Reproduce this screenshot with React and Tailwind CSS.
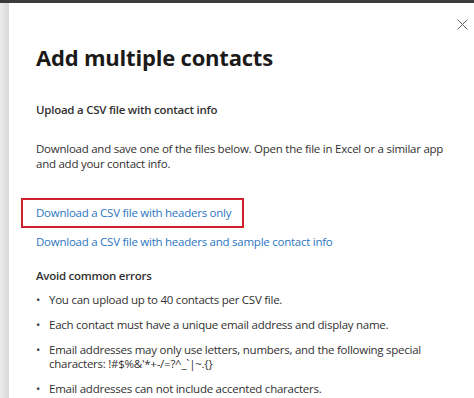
import React from "react";

export default function App() {
  const font = { fontFamily: '"Open Sans", "Noto Sans", sans-serif' };
  return (
    <div className="w-[474px] h-[398px] overflow-hidden bg-white flex flex-col" style={font}>
      <div className="h-[3px] bg-[#3b3b3b] shrink-0" />
      <div className="flex flex-1 min-h-0">
        <div className="w-[9px] shrink-0 bg-gradient-to-r from-[#ececec] to-[#d9d9d9]" />
        <div className="flex-1 relative bg-white text-[#323130]">
          <button className="absolute right-[6px] top-[16px] w-[11px] h-[11px] text-[#605e5c]">
            <svg viewBox="0 0 11 11" className="w-[11px] h-[11px]" fill="none" stroke="currentColor" strokeWidth="1">
              <path d="M0.5 0.5L10.5 10.5M10.5 0.5L0.5 10.5" />
            </svg>
          </button>
          <div className="pl-[27px] pt-[38px] pr-4 text-[11.5px] tracking-[-0.25px]">
            <h1 className="text-[22px] leading-[32px] font-bold text-[#1b1a19] tracking-[-0.2px]">Add multiple contacts</h1>
            <p className="mt-[28px] leading-[18px] font-semibold">Upload a CSV file with contact info</p>
            <p className="mt-[22px] leading-[15px]">
              Download and save one of the files below. Open the file in Excel or a similar app and add your contact info.
            </p>
            <div className="mt-[27px] -ml-[15px] w-[223px] h-[30px] border-2 border-[#d0202e] flex items-center pl-[13px] whitespace-nowrap">
              <a className="text-[#2b76c0]">Download a CSV file with headers only</a>
            </div>
            <a className="block mt-[4px] leading-[20px] text-[#2b76c0]">Download a CSV file with headers and sample contact info</a>
            <p className="mt-[15px] leading-[18px] font-semibold">Avoid common errors</p>
            <ul className="mt-[8px] leading-[14px] flex flex-col gap-[11px]">
              <li className="flex"><span className="w-[13px] shrink-0">•</span><span>You can upload up to 40 contacts per CSV file.</span></li>
              <li className="flex"><span className="w-[13px] shrink-0">•</span><span>Each contact must have a unique email address and display name.</span></li>
              <li className="flex"><span className="w-[13px] shrink-0">•</span><span>Email addresses may only use letters, numbers, and the following special characters: !#$%&amp;'*+-/=?^_`|~.{"{}"}</span></li>
              <li className="flex"><span className="w-[13px] shrink-0">•</span><span>Email addresses can not include accented characters.</span></li>
            </ul>
          </div>
        </div>
      </div>
    </div>
  );
}
